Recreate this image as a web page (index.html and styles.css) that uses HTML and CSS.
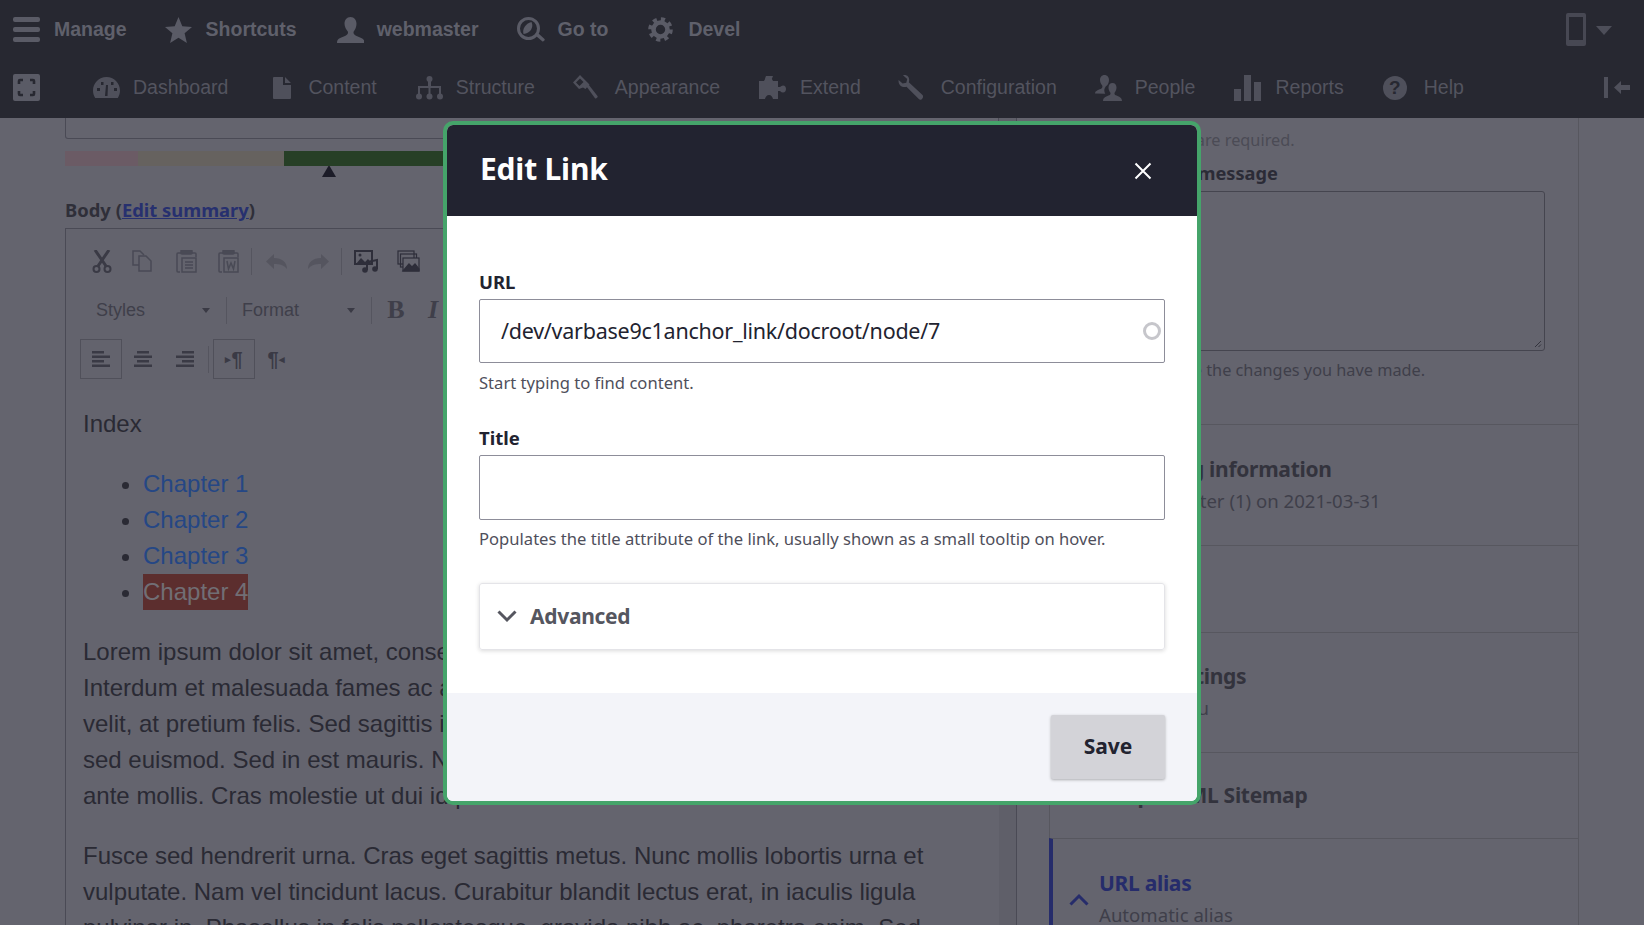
FILE: index.html
```html
<!DOCTYPE html>
<html lang="en">
<head>
    <meta charset="UTF-8">
    <title>Edit Link</title>
    <link rel="stylesheet" href="styles.css">
</head>
<body>
    <header class="toolbar">
        <nav class="bar bar-top">
            <a class="top-item top-manage">
                <svg width="27" height="25" viewBox="0 0 27 25"><rect y="0" width="27" height="5" rx="2"/><rect y="10" width="27" height="5" rx="2"/><rect y="20" width="27" height="5" rx="2"/></svg>
                Manage
            </a>
            <a class="top-item top-shortcuts">
                <svg width="27" height="26" viewBox="0 0 27 26"><polygon points="13.5,0 17.3,9.2 27,10 19.6,16.3 21.9,26 13.5,20.8 5.1,26 7.4,16.3 0,10 9.7,9.2"/></svg>
                Shortcuts
            </a>
            <a class="top-item top-user">
                <svg width="27" height="26" viewBox="0 0 27 26"><path d="M13.5 0c3.8 0 6 3 6 6.800 0 3.200-1.400 6-2.800 7.700-.6 1.700.2 3.300 2.300 4.300 3 1.400 6.800 2.200 8 4.400.4.800.5 1.700.5 2.800H0c0-1.100.1-2 .5-2.800 1.200-2.200 5-3 8-4.400 2.100-1 2.900-2.600 2.300-4.300C9.400 12.800 7.500 10 7.500 6.800 7.500 3 9.700 0 13.500 0z"/></svg>
                webmaster
            </a>
            <a class="top-item top-goto">
                <svg width="28" height="26" viewBox="0 0 28 26"><path fill-rule="evenodd" d="M11.500 0a11.500 11.500 0 1 1 0 23 11.500 11.500 0 0 1 0-23zm0 3a8.500 8.500 0 1 0 0 17 8.500 8.500 0 0 0 0-17z"/><path d="M6.500 17c-1.500-5 2-10.500 8-12 2.500 5-1 11.500-8 12z"/><path d="M19 19l2.500-2.500 6 5.500c1 1-1.300 3.300-2.300 2.300z"/></svg>
                Go to
            </a>
            <a class="top-item top-devel">
                <svg width="25" height="25" viewBox="0 0 25 25"><circle cx="12.500" cy="12.500" r="7" fill="none" stroke="#5a5b66" stroke-width="4.600"/><circle cx="12.500" cy="12.500" r="10.300" fill="none" stroke="#5a5b66" stroke-width="4" stroke-dasharray="4.100 4"/></svg>
                Devel
            </a>
            <span class="device">
                <svg width="20" height="33" viewBox="0 0 20 33"><path fill-rule="evenodd" d="M2 0h16a2 2 0 0 1 2 2v29a2 2 0 0 1-2 2H2a2 2 0 0 1-2-2V2a2 2 0 0 1 2-2zm1 4v23h14V4z"/></svg>
                <i class="device-caret"></i>
            </span>
        </nav>
        <nav class="bar bar-nav">
            <span class="nav-toggle">
                <svg width="27" height="27" viewBox="0 0 27 27"><rect width="27" height="27" rx="2"/><path d="M6 10V7q0-1 1-1h3M17 6h3q1 0 1 1v3M21 17v3q0 1-1 1h-3M10 21H7q-1 0-1-1v-3" fill="none" stroke="#272831" stroke-width="2.600"/></svg>
            </span>
            <a class="nav-item nav-dashboard">
                <svg width="27" height="21" viewBox="0 0 27 21"><path fill-rule="evenodd" d="M13.500 0C6 0 0 6 0 13.500c0 2.800.8 5.400 2.200 7.500h22.600c1.400-2.100 2.200-4.700 2.200-7.500C27 6 21 0 13.500 0zM12 19l1-11h2l-.500 11z"/><rect x="4" y="11" width="3" height="3" fill="#272831"/><rect x="8" y="5" width="2.500" height="3" fill="#272831"/><rect x="18" y="5" width="2.500" height="3" fill="#272831"/><rect x="21" y="11" width="3" height="3" fill="#272831"/></svg>
                Dashboard
            </a>
            <a class="nav-item nav-content">
                <svg width="18" height="22" viewBox="0 0 18 22"><path d="M1 0h9v8h8v13a1 1 0 0 1-1 1H1a1 1 0 0 1-1-1V1a1 1 0 0 1 1-1zM12 0l6 6h-6z"/></svg>
                Content
            </a>
            <a class="nav-item nav-structure">
                <svg width="27" height="24" viewBox="0 0 27 24"><circle cx="13.500" cy="3" r="3"/><circle cx="3" cy="20.500" r="3"/><circle cx="13.500" cy="20.500" r="3"/><circle cx="24" cy="20.500" r="3"/><path d="M12 5h3v5h10v8h-2v-6h-8.500v6h-2v-6H4v6H2v-8h10z"/></svg>
                Structure
            </a>
            <a class="nav-item nav-appearance">
                <svg width="25" height="25" viewBox="0 0 25 25"><path fill-rule="evenodd" d="M8 0l9.500 9.500-4 4.500L11 12.500 7 14 1 7.500zm0 3.500L4 7.500l3.500 3.500 4-4z" transform="translate(-1 0)"/><path d="M13.500 11.500l2-2 9 11.500c.8 1.200-1.500 3.200-2.500 2.200z"/></svg>
                Appearance
            </a>
            <a class="nav-item nav-extend">
                <svg width="27" height="24" viewBox="0 0 27 24"><path d="M7 0h7l-1 2.500c-.3.800.5 1.500 1 2.500h5v6h2c1-1 2-1.500 3-1.500 2 0 3 1.800 3 3.500s-1 3.500-3 3.500c-1 0-2-.5-3-1.500h-2v8h-5c-.5-2-1.800-4-4-4s-3.500 2-4 4H0V5h5c.5-1 1.300-1.700 1-2.500z"/></svg>
                Extend
            </a>
            <a class="nav-item nav-config">
                <svg width="25" height="25" viewBox="0 0 25 25"><path d="M6.500 0C8 0 9.200.5 10 1.500c1.300 1.500 1.500 3.800.8 5.700L24.500 20c.8 1 .8 2 0 3.200-1 1.600-2.500 2-3.700.9L8.500 11.700C6.500 12.400 4 12 2.300 10.400 1 9 .3 7 .6 5l4 3.500 3.700-.8.900-3.700L5 .2c.5-.1 1-.2 1.500-.2z"/></svg>
                Configuration
            </a>
            <a class="nav-item nav-people">
                <svg width="27" height="26" viewBox="0 0 27 26"><path d="M9.500 0c2.800 0 4.500 2.200 4.500 5 0 2-.8 4-1.800 5.200-2 1.300-2.900 3.300-2.900 5.300 0 1.200.4 2.300 1 3.300L0 18.500c0-3 4.500-3.800 6.500-5 1-.6 1.200-2 .6-3.200C6 9 5 7 5 5c0-2.800 1.700-5 4.500-5z"/><path d="M17.500 8c2.500 0 4 2 4 4.500 0 2-.8 3.700-1.800 5-.5 1.200-.2 2.200 1 2.800 2.200 1 6.300 1.800 6.300 5.700H8c0-3.900 4.100-4.700 6.300-5.700 1.200-.6 1.500-1.600 1-2.800-1-1.300-1.800-3-1.800-5 0-2.500 1.500-4.500 4-4.500z"/></svg>
                People
            </a>
            <a class="nav-item nav-reports">
                <svg width="27" height="26" viewBox="0 0 27 26"><rect y="14" width="7" height="12"/><rect x="10" y="0" width="7" height="26"/><rect x="20" y="7" width="7" height="19"/></svg>
                Reports
            </a>
            <a class="nav-item nav-help">
                <span class="help-icon">?</span>
                Help
            </a>
            <span class="nav-collapse">
                <svg width="26" height="21" viewBox="0 0 26 21"><rect width="4" height="21"/><path d="M10 10.500L17 4v4h9v5h-9v4z"/></svg>
            </span>
        </nav>
    </header>

    <main class="page">
        <section class="content-col">
            <div class="content-inner">
                <div class="prev-input"></div>
                <div class="strength">
                    <span class="strength-weak"></span>
                    <span class="strength-fair"></span>
                    <span class="strength-good"></span>
                </div>
                <i class="strength-arrow"></i>
                <div class="body-label">Body (<a>Edit summary</a>)</div>

                <div class="editor">
                    <div class="ed-toolbar">
                        <div class="ed-row">
                            <span class="ed-btn"><svg width="20" height="23" viewBox="0 0 20 23" fill="none" stroke="#3a3a45" stroke-width="2"><path d="M3 0l11 16M17 0L6 16" stroke-width="3"/><circle cx="4.500" cy="19" r="3"/><circle cx="15.500" cy="19" r="3"/></svg></span>
                            <span class="ed-btn ed-nudge"><svg width="20" height="22" viewBox="0 0 20 22" fill="none" stroke="#494a55" stroke-width="1.500"><path d="M7 15H1V1h7l4 4"/><path d="M7 6h7l5 5v10H7z"/></svg></span>
                            <span class="ed-btn"><svg width="21" height="23" viewBox="0 0 21 23" fill="none" stroke="#494a55" stroke-width="1.500"><path d="M5 3H2q-1 0-1 1v17q0 1 1 1h2M16 3h3q1 0 1 1v3"/><rect x="5" y="0" width="11" height="4" fill="#494a55" rx="1"/><rect x="6" y="8" width="14" height="14"/><path d="M9 12h8M9 15h8M9 18h8"/></svg></span>
                            <span class="ed-btn"><svg width="21" height="23" viewBox="0 0 21 23" fill="none" stroke="#494a55" stroke-width="1.500"><path d="M5 3H2q-1 0-1 1v17q0 1 1 1h2M16 3h3q1 0 1 1v3"/><rect x="5" y="0" width="11" height="4" fill="#494a55" rx="1"/><rect x="6" y="8" width="14" height="14"/><path d="M9 11l1.500 8 2.500-6 2.500 6L17 11"/></svg></span>
                            <i class="ed-sep"></i>
                            <span class="ed-btn"><svg width="21" height="15" viewBox="0 0 21 15" fill="#55555f"><path d="M8 0v4c8 0 13 4 13 11-3-4-7-5-13-5v5L0 7.500z"/></svg></span>
                            <span class="ed-btn"><svg width="21" height="15" viewBox="0 0 21 15" fill="#55555f"><path d="M13 0v4C5 4 0 8 0 15c3-4 7-5 13-5v5l8-7.500z"/></svg></span>
                            <i class="ed-sep"></i>
                            <span class="ed-btn"><svg width="24" height="23" viewBox="0 0 24 23"><rect x="1" y="1" width="17" height="13" fill="none" stroke="#2e2e3a" stroke-width="2"/><path d="M2 14l5-6 4 4 3-3 4 5z" fill="#2e2e3a"/><circle cx="6" cy="5" r="1.500" fill="#2e2e3a"/><path d="M13 20V12l10-2v9" fill="none" stroke="#2e2e3a" stroke-width="2"/><circle cx="11" cy="20" r="2.800" fill="#2e2e3a"/><circle cx="21" cy="19" r="2.800" fill="#2e2e3a"/></svg></span>
                            <span class="ed-btn"><svg width="23" height="22" viewBox="0 0 23 22" fill="none" stroke="#2e2e3a" stroke-width="1.200"><rect x="1" y="1" width="16" height="13"/><rect x="3.500" y="4" width="16" height="13"/><rect x="6" y="8" width="16" height="13" fill="#64646e"/><path d="M6 21l6-7 3 3 3-3 4 5v2z" fill="#2e2e3a"/></svg></span>
                        </div>
                        <div class="ed-row ed-row-combos">
                            <span class="ed-combo ed-combo-styles">Styles<i class="ed-caret"></i></span>
                            <i class="ed-sep"></i>
                            <span class="ed-combo ed-combo-format">Format<i class="ed-caret"></i></span>
                            <i class="ed-sep"></i>
                            <span class="ed-btn ed-bold">B</span>
                            <span class="ed-btn ed-italic">I</span>
                        </div>
                        <div class="ed-row ed-row-align">
                            <span class="ed-btn ed-on"><svg width="18" height="16" viewBox="0 0 18 16" fill="#3a3a45"><rect width="12" height="2.500"/><rect y="4.500" width="18" height="2.500"/><rect y="9" width="12" height="2.500"/><rect y="13.500" width="18" height="2.500"/></svg></span>
                            <span class="ed-btn"><svg width="18" height="16" viewBox="0 0 18 16" fill="#3a3a45"><rect x="3" width="12" height="2.500"/><rect y="4.500" width="18" height="2.500"/><rect x="3" y="9" width="12" height="2.500"/><rect y="13.500" width="18" height="2.500"/></svg></span>
                            <span class="ed-btn"><svg width="18" height="16" viewBox="0 0 18 16" fill="#3a3a45"><rect x="6" width="12" height="2.500"/><rect y="4.500" width="18" height="2.500"/><rect x="6" y="9" width="12" height="2.500"/><rect y="13.500" width="18" height="2.500"/></svg></span>
                            <i class="ed-sep ed-sep-align"></i>
                            <span class="ed-btn ed-on ed-para"><span class="ed-tri">&#9656;</span>&#182;</span>
                            <span class="ed-btn ed-para">&#182;<span class="ed-tri">&#9666;</span></span>
                        </div>
                    </div>

                    <div class="ed-body">
                        <p>Index</p>
                        <ul>
                            <li><a>Chapter 1</a></li>
                            <li><a>Chapter 2</a></li>
                            <li><a>Chapter 3</a></li>
                            <li><a class="anchor-mark">Chapter 4</a></li>
                        </ul>
                        <p>Lorem ipsum dolor sit amet, consectetur adipiscing elit. Vestibulum<br>
                        Interdum et malesuada fames ac ante ipsum primis in faucibus. In<br>
                        velit, at pretium felis. Sed sagittis imperdiet augue, vel tempus nunc<br>
                        sed euismod. Sed in est mauris. Nulla facilisi. Aliquam erat volutpat.<br>
                        ante mollis. Cras molestie ut dui id pretium.</p>
                        <p>Fusce sed hendrerit urna. Cras eget sagittis metus. Nunc mollis lobortis urna et<br>
                        vulputate. Nam vel tincidunt lacus. Curabitur blandit lectus erat, in iaculis ligula<br>
                        pulvinar in. Phasellus in felis pellentesque, gravida nibh ac, pharetra enim. Sed</p>
                    </div>
                </div>
            </div>
        </section>

        <aside class="side">
            <div class="side-form">
                <p class="side-note">Fields with a * are required.</p>
                <label class="side-label">Revision log message</label>
                <div class="side-textarea">
                    <svg class="resize-grip" width="8" height="8" viewBox="0 0 8 8"><path d="M1 7l6-6M4.500 7L7 4.500" stroke="#33333d" fill="none"/></svg>
                </div>
                <p class="side-help">Briefly describe the changes you have made.</p>
            </div>
            <div class="panel panel-author">
                <h3>Authoring information</h3>
                <small>By webmaster (1) on 2021-03-31</small>
            </div>
            <div class="panel panel-meta">
                <h3>Options</h3>
            </div>
            <div class="panel panel-menu">
                <h3>Menu settings</h3>
                <small>Not in menu</small>
            </div>
            <div class="panel panel-sitemap">
                <h3>Simple XML Sitemap</h3>
            </div>
            <div class="panel panel-alias">
                <svg class="alias-chevron" width="20" height="13" viewBox="0 0 20 13"><path d="M1.500 11.500L10 3l8.500 8.500" fill="none" stroke="#262c6b" stroke-width="3"/></svg>
                <h3>URL alias</h3>
                <small>Automatic alias</small>
            </div>
        </aside>
    </main>

    <div class="modal">
        <div class="modal-head">
            <h2>Edit Link</h2>
            <svg class="modal-close" width="18" height="18" viewBox="0 0 18 18"><path d="M1.500 1.500l15 15M16.500 1.500l-15 15" stroke="#fff" stroke-width="2"/></svg>
        </div>
        <div class="modal-body">
            <label class="field-label">URL</label>
            <div class="url-wrap">
                <input class="field-input field-url" type="text" value="/dev/varbase9c1anchor_link/docroot/node/7">
                <i class="throbber"></i>
            </div>
            <p class="field-help">Start typing to find content.</p>
            <label class="field-label field-label-title">Title</label>
            <input class="field-input field-title" type="text">
            <p class="field-help field-help-title">Populates the title attribute of the link, usually shown as a small tooltip on hover.</p>
            <div class="advanced">
                <svg width="20" height="13" viewBox="0 0 20 13"><path d="M1.500 1.500L10 10l8.500-8.500" fill="none" stroke="#55565f" stroke-width="3"/></svg>
                <span class="advanced-text">Advanced</span>
            </div>
        </div>
        <div class="modal-foot">
            <button class="save-btn">Save</button>
        </div>
    </div>
</body>
</html>
```

FILE: styles.css
```css
* {
    box-sizing: border-box;
}
html, body {
    height: 925px;
    overflow: hidden;
}
body {
    margin: 0;
    position: relative;
    background-color: #64646e;
    font-family: "Noto Sans", sans-serif;
    color: #2b2b36;
}
p, h2, h3 {
    margin: 0;
}

/* Admin toolbar */
.toolbar {
    height: 118px;
    background-color: #272831;
    font-family: "Liberation Sans", sans-serif;
    color: #5f606b;
}
.toolbar svg {
    fill: #5a5b66;
    flex: none;
}
.bar {
    display: flex;
    align-items: center;
    height: 59px;
}
.bar-nav {
    padding-bottom: 2px;
}
.bar-nav svg {
    fill: #4f505b;
}
.top-item, .nav-item {
    display: flex;
    align-items: center;
    font-size: 19.5px;
}
.top-item {
    font-weight: bold;
}
.top-manage { margin-left: 13px; gap: 14px; }
.top-shortcuts { margin-left: 38px; gap: 14px; }
.top-user { margin-left: 40px; gap: 13px; }
.top-goto { margin-left: 38px; gap: 13px; }
.top-devel { margin-left: 40px; gap: 15px; }
.device {
    display: flex;
    align-items: center;
    gap: 10px;
    margin-left: auto;
    margin-right: 32px;
}
.device svg {
    fill: #474853;
}
.device-caret {
    width: 0;
    height: 0;
    margin-top: 2px;
    border-left: 8px solid transparent;
    border-right: 8px solid transparent;
    border-top: 9px solid #4d4e59;
}
.nav-item {
    gap: 13px;
    color: #53545f;
}
.nav-toggle {
    display: flex;
    margin-left: 13px;
}
.nav-toggle svg {
    fill: #5a5b66;
}
.nav-dashboard { margin-left: 53px; }
.nav-content { margin-left: 45px; gap: 17px; }
.nav-structure { margin-left: 39px; }
.nav-appearance { margin-left: 38px; gap: 17px; }
.nav-extend { margin-left: 39px; gap: 14px; }
.nav-config { margin-left: 37px; gap: 18px; }
.nav-people { margin-left: 38px; gap: 13px; }
.nav-reports { margin-left: 39px; gap: 14px; }
.nav-help { margin-left: 39px; gap: 17px; }
.help-icon {
    width: 24px;
    height: 24px;
    border-radius: 50%;
    background-color: #4f505b;
    color: #272831;
    font-weight: bold;
    font-size: 19px;
    line-height: 24px;
    text-align: center;
}
.nav-collapse {
    display: flex;
    margin-left: auto;
    margin-right: 14px;
}

/* Page under the dialog */
.page {
    display: flex;
    height: 807px;
}
.content-col {
    width: 1017px;
    padding-left: 65px;
    padding-right: 17px;
    border-right: 1px solid #4a4a55;
    background-color: #5f5f69;
}
.content-inner {
    background-color: #64646e;
    margin-left: -65px;
    padding-left: 65px;
    height: 100%;
}
.prev-input {
    height: 21px;
    border: 1px solid #4a4a55;
    border-top: none;
    border-radius: 0 0 3px 3px;
}
.strength {
    display: flex;
    height: 15px;
    margin-top: 12px;
}
.strength-weak { width: 73px; background-color: #6b5b65; }
.strength-fair { width: 146px; background-color: #66625f; }
.strength-good { flex: 1; background-color: #273f26; }
.strength-arrow {
    display: block;
    width: 0;
    height: 0;
    margin-top: -1px;
    margin-left: 257px;
    border-left: 7.5px solid transparent;
    border-right: 7.5px solid transparent;
    border-bottom: 12px solid #1c1c28;
}
.body-label {
    margin-top: 21px;
    font-size: 18.4px;
    font-weight: bold;
    line-height: 24px;
    color: #2f2f39;
}
.body-label a {
    color: #27306f;
    text-decoration: underline;
}

/* CKEditor */
.editor {
    margin-top: 6px;
    border-top: 1px solid #4a4a55;
    border-left: 1px solid #4a4a55;
    font-family: "Liberation Sans", sans-serif;
}
.ed-toolbar {
    padding: 11px 0 11px 15px;
    background-color: #63636d;
}
.ed-row {
    display: flex;
    align-items: center;
    height: 42px;
}
.ed-row-combos {
    margin-top: 7px;
}
.ed-row-align {
    margin-top: 8px;
    margin-left: -1px;
    height: 40px;
}
.ed-btn {
    display: flex;
    align-items: center;
    justify-content: center;
    width: 42px;
    height: 100%;
}
.ed-nudge {
    padding-right: 4px;
}
.ed-sep {
    width: 1px;
    height: 27px;
    margin: 0 3px 0 2px;
    background-color: #55555f;
}
.ed-row-align .ed-sep-align {
    margin-left: 2px;
    margin-right: 4px;
}
.ed-combo {
    display: flex;
    align-items: center;
    height: 100%;
    font-size: 18px;
    color: #3f3f4a;
}
.ed-combo-styles {
    width: 143px;
    padding-left: 15px;
}
.ed-combo-format {
    width: 139px;
    padding-left: 12px;
}
.ed-caret {
    margin-left: auto;
    margin-right: 14px;
    border-left: 4.500px solid transparent;
    border-right: 4.500px solid transparent;
    border-top: 5px solid #3a3a45;
}
.ed-bold {
    font-weight: bold;
    font-size: 26px;
    font-family: "Liberation Serif", serif;
    color: #3f3f4a;
}
.ed-italic {
    margin-left: -5px;
    font-weight: bold;
    font-style: italic;
    font-size: 26px;
    font-family: "Liberation Serif", serif;
    color: #3f3f4a;
}
.ed-on {
    border: 1px solid #50505a;
}
.ed-para {
    font-size: 20px;
    font-weight: bold;
    color: #3a3a45;
}
.ed-tri {
    font-size: 11px;
}
.ed-body {
    padding: 16px 0 0 17px;
    font-size: 24px;
    line-height: 36px;
    color: #2a2a34;
    white-space: nowrap;
}
.ed-body p {
    margin-bottom: 24px;
}
.ed-body ul {
    margin: 0 0 24px;
    padding-left: 60px;
}
.ed-body a {
    color: #254785;
}
.ed-body a.anchor-mark {
    display: inline-block;
    background-color: #5c2e2e;
    color: #716e75;
}

/* Sidebar */
.side {
    width: 530px;
    margin-left: 32px;
    border-right: 1px solid #57575f;
}
.side-form {
    height: 306px;
    padding: 10px 33px 0 34px;
    border-left: 1px solid #64646e;
}
.side-note {
    font-size: 16.3px;
    line-height: 24px;
    color: #4b4b55;
}
.side-label {
    display: block;
    margin-top: 9px;
    font-size: 18.2px;
    font-weight: bold;
    line-height: 24px;
}
.side-textarea {
    position: relative;
    height: 160px;
    margin-top: 6px;
    border: 1px solid #45454f;
    border-radius: 3px;
}
.resize-grip {
    position: absolute;
    right: 2px;
    bottom: 2px;
}
.side-help {
    margin-top: 8px;
    font-size: 16.3px;
    line-height: 22px;
    color: #3f3f4a;
}
.panel {
    position: relative;
    padding: 30px 0 0 50px;
    border-top: 1px solid #57575f;
    border-left: 1px solid #57575f;
}
.panel h3 {
    font-size: 21px;
    letter-spacing: -0.3px;
    line-height: 28px;
    font-weight: bold;
    color: #33333d;
}
.panel small {
    display: block;
    margin-top: 6px;
    font-size: 18.6px;
    line-height: 24px;
    color: #3f3f4a;
}
.panel-author { height: 121px; }
.panel-meta { height: 87px; }
.panel-menu { height: 120px; padding-top: 29px; }
.panel-sitemap { height: 86px; padding-top: 28px; }
.panel-alias {
    height: 90px;
    padding-left: 46px;
    border-left: 4px solid #262c6b;
}
.panel-alias h3 {
    color: #262c6b;
}
.alias-chevron {
    position: absolute;
    left: 16px;
    top: 54px;
}

/* Dialog */
.modal {
    position: absolute;
    left: 443px;
    top: 121px;
    display: flex;
    flex-direction: column;
    width: 758px;
    height: 684px;
    border: 4px solid #45a46a;
    border-radius: 10px;
    overflow: hidden;
    background-color: #fff;
}
.modal-head {
    display: flex;
    align-items: center;
    justify-content: space-between;
    flex: none;
    height: 91px;
    padding: 0 45px 0 33px;
    background-color: #222330;
}
.modal-head h2 {
    margin-bottom: 5px;
    font-size: 30px;
    font-weight: bold;
    letter-spacing: -0.2px;
    color: #fff;
}
.modal-body {
    flex: 1;
    padding: 54px 32px 0 32px;
}
.field-label {
    display: block;
    font-size: 18.5px;
    font-weight: bold;
    line-height: 24px;
    color: #222330;
}
.field-label-title {
    margin-top: 33px;
}
.url-wrap {
    position: relative;
}
.field-input {
    display: block;
    width: 100%;
    margin-top: 5px;
    padding: 0 20px 2px 21px;
    border: 1px solid #8d8d99;
    border-radius: 2px;
    font-family: "Noto Sans", sans-serif;
    font-size: 21.5px;
    letter-spacing: -0.25px;
    color: #222330;
    background-color: #fff;
}
.field-url { height: 64px; }
.field-title { height: 65px; }
.throbber {
    position: absolute;
    right: 4px;
    top: 23px;
    width: 18px;
    height: 18px;
    border: 3px solid #c6c6cb;
    border-radius: 50%;
}
.field-help {
    margin-top: 10px;
    font-size: 16.6px;
    line-height: 20px;
    color: #4f4f5b;
}
.field-help-title {
    margin-top: 9px;
}
.advanced {
    display: flex;
    align-items: center;
    gap: 13px;
    height: 67px;
    margin-top: 34px;
    padding-left: 17px;
    border: 1px solid #e4e4e8;
    border-radius: 3px;
    box-shadow: 0 1px 4px rgba(0,0,0,0.15);
    font-size: 21px;
    letter-spacing: -0.3px;
    font-weight: bold;
    color: #55565f;
}
.advanced-text {
    margin-bottom: 2px;
}
.modal-foot {
    display: flex;
    justify-content: flex-end;
    flex: none;
    height: 108px;
    padding: 22px 32px 0 0;
    background-color: #f3f4f9;
}
.save-btn {
    width: 114px;
    height: 64px;
    padding: 0 0 2px;
    border: none;
    border-radius: 2px;
    background-color: #d3d3d8;
    box-shadow: 0 1px 3px rgba(0,0,0,0.3);
    font-family: "Noto Sans", sans-serif;
    font-size: 21px;
    font-weight: bold;
    color: #222330;
}
```
